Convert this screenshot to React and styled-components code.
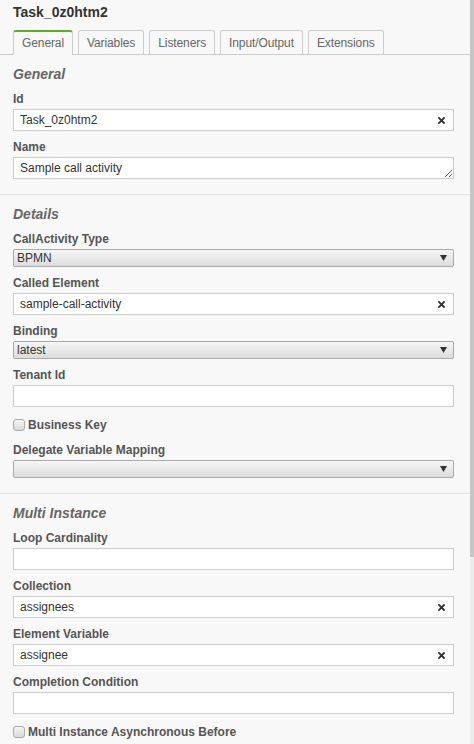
import React from 'react'
import styled, { createGlobalStyle } from 'styled-components'

const GlobalStyle = createGlobalStyle`
  html, body {
    margin: 0;
    padding: 0;
    background: #f8f8f8;
    font-family: "Liberation Sans", Arial, sans-serif;
  }
`

const tabs = ['General', 'Variables', 'Listeners', 'Input/Output', 'Extensions']

function ClearIcon() {
  return (
    <svg width="7" height="7" viewBox="0 0 7 7">
      <path d="M1 1 L6 6 M6 1 L1 6" stroke="#333" strokeWidth="1.8" strokeLinecap="square" />
    </svg>
  )
}

function Arrow() {
  return (
    <svg width="7" height="6" viewBox="0 0 7 6">
      <path d="M0 0 H7 L3.5 6 Z" fill="#333" />
    </svg>
  )
}

function TextEntry({ label, value, clear }) {
  return (
    <Entry>
      <Label>{label}</Label>
      <InputBox>
        <Input defaultValue={value || ''} />
        {clear && value ? <ClearBtn><ClearIcon /></ClearBtn> : null}
      </InputBox>
    </Entry>
  )
}

function SelectEntry({ label, value }) {
  return (
    <Entry>
      <Label>{label}</Label>
      <Select>
        <span>{value}</span>
        <Arrow />
      </Select>
    </Entry>
  )
}

function CheckEntry({ label }) {
  return (
    <CheckRow>
      <Check type="checkbox" />
      <CheckLabel>{label}</CheckLabel>
    </CheckRow>
  )
}

function App() {
  return (
    <>
      <GlobalStyle />
      <Layout>
        <Panel>
          <Header>
            <Title>Task_0z0htm2</Title>
          </Header>
          <TabBar>
            {tabs.map(t => (
              <Tab key={t} active={t === 'General'}>{t}</Tab>
            ))}
          </TabBar>

          <Group>
            <GroupTitle>General</GroupTitle>
            <TextEntry label="Id" value="Task_0z0htm2" clear />
            <Entry>
              <Label>Name</Label>
              <TextArea rows={1} defaultValue="Sample call activity" />
            </Entry>
          </Group>

          <Group>
            <GroupTitle>Details</GroupTitle>
            <SelectEntry label="CallActivity Type" value="BPMN" />
            <TextEntry label="Called Element" value="sample-call-activity" clear />
            <SelectEntry label="Binding" value="latest" />
            <TextEntry label="Tenant Id" />
            <CheckEntry label="Business Key" />
            <SelectEntry label="Delegate Variable Mapping" value="" />
          </Group>

          <Group>
            <GroupTitle>Multi Instance</GroupTitle>
            <TextEntry label="Loop Cardinality" />
            <TextEntry label="Collection" value="assignees" clear />
            <TextEntry label="Element Variable" value="assignee" clear />
            <TextEntry label="Completion Condition" />
            <CheckEntry label="Multi Instance Asynchronous Before" />
          </Group>
        </Panel>
        <ScrollTrack>
          <ScrollThumb />
        </ScrollTrack>
      </Layout>
    </>
  )
}

export default App

const Layout = styled.div`
  display: flex;
  height: 100vh;
  overflow: hidden;
  background: #f8f8f8;
`

const Panel = styled.div`
  flex: 1;
  min-width: 0;
  overflow: hidden;
  color: #333;
`

const ScrollTrack = styled.div`
  width: 4px;
  flex-shrink: 0;
  background: #ececec;
`

const ScrollThumb = styled.div`
  height: 557px;
  background: #c6c6c6;
`

const Header = styled.div`
  padding: 4px 13px 0;
`

const Title = styled.div`
  font-size: 14px;
  line-height: 17px;
  font-weight: bold;
  color: #333;
`

const TabBar = styled.div`
  display: flex;
  align-items: flex-end;
  gap: 5px;
  margin-top: 9px;
  padding: 0 13px;
  border-bottom: 1px solid #ccc;
`

const Tab = styled.div`
  box-sizing: border-box;
  height: ${p => (p.active ? '25px' : '24px')};
  margin-bottom: ${p => (p.active ? '-1px' : '0')};
  padding: ${p => (p.active ? '4px 8px 0' : '5px 8px 0')};
  border: 1px solid #ccc;
  border-bottom: none;
  border-top: ${p => (p.active ? '2px solid #52b415' : '1px solid #ccc')};
  border-radius: 3px 3px 0 0;
  background: #f8f8f8;
  font-size: 12px;
  line-height: 15px;
  letter-spacing: -0.1px;
  color: #666;
  white-space: nowrap;
`

const Group = styled.div`
  padding: 11px 16px 6px 13px;
  border-bottom: 1px solid #e2e2e2;
`

const GroupTitle = styled.div`
  font-size: 14px;
  line-height: 17px;
  font-weight: bold;
  font-style: italic;
  color: #666;
  margin-bottom: 9px;
`

const Entry = styled.div`
  margin-bottom: 9px;
`

const Label = styled.div`
  font-size: 12px;
  line-height: 15px;
  font-weight: bold;
  color: #555;
  margin-bottom: 2px;
`

const InputBox = styled.div`
  display: flex;
  align-items: center;
  box-sizing: border-box;
  height: 22px;
  border: 1px solid #ccc;
  background: #fff;
`

const Input = styled.input`
  flex: 1;
  min-width: 0;
  border: none;
  outline: none;
  background: transparent;
  padding: 0 6px;
  font-family: "Liberation Sans", Arial, sans-serif;
  font-size: 12px;
  color: #333;
`

const ClearBtn = styled.span`
  display: flex;
  align-items: center;
  justify-content: center;
  width: 22px;
  height: 100%;
  margin-right: 1px;
`

const TextArea = styled.textarea`
  display: block;
  box-sizing: border-box;
  width: 100%;
  height: 22px;
  min-height: 22px;
  resize: vertical;
  border: 1px solid #ccc;
  background: #fff;
  padding: 3px 6px;
  font-family: "Liberation Sans", Arial, sans-serif;
  font-size: 12px;
  line-height: 14px;
  color: #333;
  outline: none;
  overflow: hidden;
`

const Select = styled.div`
  display: flex;
  align-items: center;
  justify-content: space-between;
  box-sizing: border-box;
  height: 18px;
  padding: 0 6px 0 3px;
  border: 1px solid #aaa;
  border-radius: 2px;
  background: linear-gradient(#f6f6f6, #dcdcdc);
  font-size: 12px;
  color: #333;
`

const CheckRow = styled.label`
  display: flex;
  align-items: center;
  height: 18px;
  margin-bottom: 9px;
`

const Check = styled.input`
  appearance: none;
  box-sizing: border-box;
  width: 12px;
  height: 12px;
  margin: 0 3px 0 0;
  border: 1px solid #aaa;
  border-radius: 3px;
  background: linear-gradient(#f4f4f4, #dadada);
`

const CheckLabel = styled.span`
  font-size: 12px;
  font-weight: bold;
  color: #555;
`
